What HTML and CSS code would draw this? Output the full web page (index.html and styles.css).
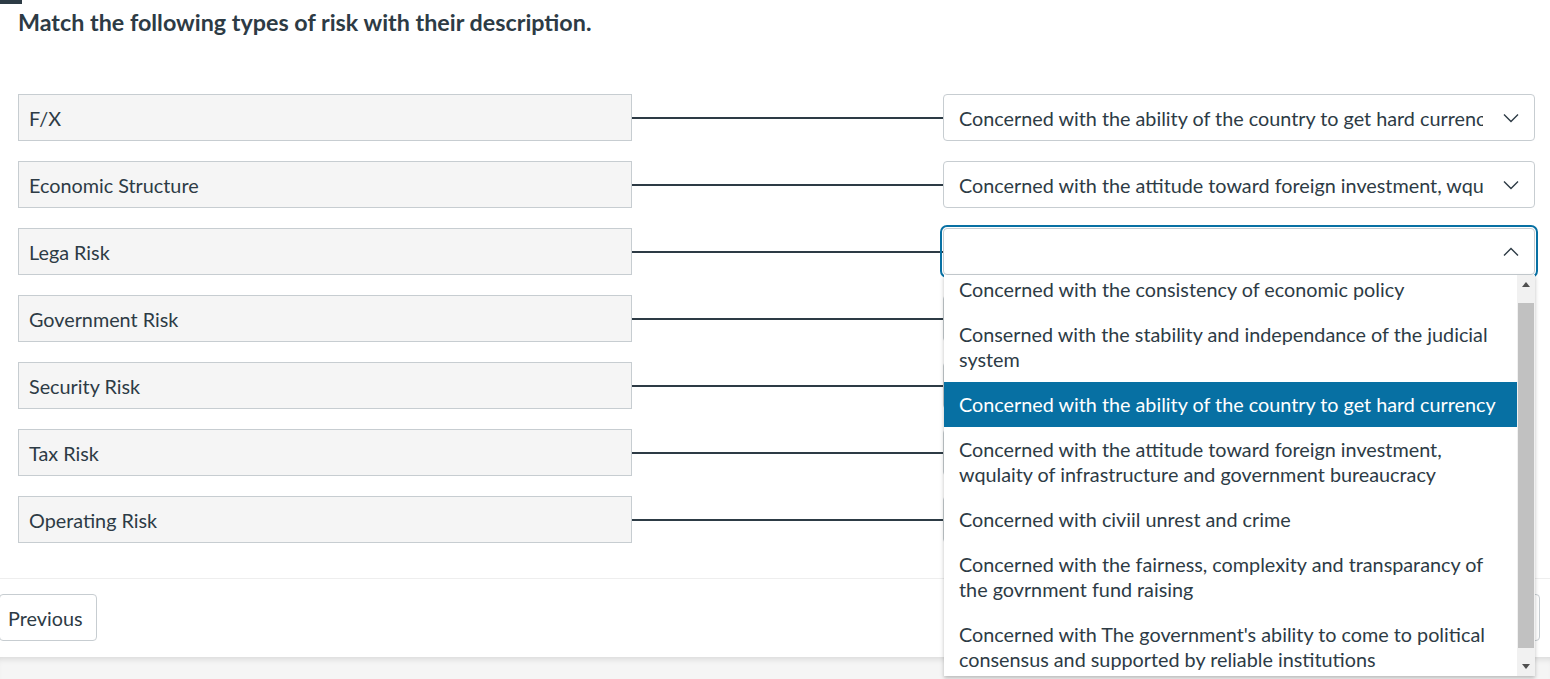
FILE: index.html
```html
<!doctype html>
<html lang="en">
  <head>
    <meta charset="utf-8">
    <title>Quiz question</title>
    <link rel="stylesheet" href="styles.css">
  </head>
  <body>
    <div class="topmark"></div>
    <div class="question">
      <h1 class="prompt">Match the following types of risk with their description.</h1>
      <div class="matches">
        <div class="row">
          <div class="term">F/X</div>
          <div class="link"></div>
          <div class="select">
            <span class="value">Concerned with the ability of the country to get hard currency</span>
            <svg class="chev" width="16" height="10" viewBox="0 0 16 10"><polyline points="1,1.5 8,8.5 15,1.5"/></svg>
          </div>
        </div>
        <div class="row">
          <div class="term">Economic Structure</div>
          <div class="link"></div>
          <div class="select">
            <span class="value">Concerned with the attitude toward foreign investment, wqulaity of infrastructure and government bureaucracy</span>
            <svg class="chev" width="16" height="10" viewBox="0 0 16 10"><polyline points="1,1.5 8,8.5 15,1.5"/></svg>
          </div>
        </div>
        <div class="row">
          <div class="term">Lega Risk</div>
          <div class="link"></div>
          <div class="select open">
            <span class="value"></span>
            <svg class="chev" width="16" height="10" viewBox="0 0 16 10"><polyline points="1,8.5 8,1.5 15,8.5"/></svg>
            <div class="menu">
              <ul class="options">
                <li>Concerned with the consistency of economic policy</li>
                <li>Conserned with the stability and independance of the judicial system</li>
                <li class="active">Concerned with the ability of the country to get hard currency</li>
                <li>Concerned with the attitude toward foreign investment, wqulaity of infrastructure and government bureaucracy</li>
                <li>Concerned with civiil unrest and crime</li>
                <li>Concerned with the fairness, complexity and transparancy of the govrnment fund raising</li>
                <li>Concerned with The government's ability to come to political consensus and supported by reliable institutions</li>
              </ul>
              <div class="scrollbar">
                <span class="arrow up"></span>
                <span class="thumb"></span>
                <span class="arrow down"></span>
              </div>
            </div>
          </div>
        </div>
        <div class="row">
          <div class="term">Government Risk</div>
          <div class="link"></div>
          <div class="select"><span class="value"></span></div>
        </div>
        <div class="row">
          <div class="term">Security Risk</div>
          <div class="link"></div>
          <div class="select"><span class="value"></span></div>
        </div>
        <div class="row">
          <div class="term">Tax Risk</div>
          <div class="link"></div>
          <div class="select"><span class="value"></span></div>
        </div>
        <div class="row">
          <div class="term">Operating Risk</div>
          <div class="link"></div>
          <div class="select"><span class="value"></span></div>
        </div>
      </div>
    </div>
    <div class="footer">
      <button class="btn">Previous</button>
      <button class="btn next" aria-label="Next"></button>
    </div>
    <div class="below"></div>
  </body>
</html>
```

FILE: styles.css
```css
* { box-sizing: border-box; }
body { margin: 0; font-family: Lato, "Open Sans", sans-serif; color: #2d3b45; background: #fff; overflow: hidden; }

.topmark { width: 22px; height: 4px; background: #2d3b45; }

.question { padding: 0 15px 0 18px; }
h1.prompt { font-size: 23.3px; font-weight: bold; line-height: 28px; margin: 4px 0 0 0; }

.matches { margin-top: 58px; display: flex; flex-direction: column; gap: 20px; }
.row { display: flex; align-items: center; height: 47px; }
.term { width: 614px; height: 47px; background: #f5f5f5; border: 1px solid #c7cdd1; padding: 0 10px; font-size: 19.8px; display: flex; align-items: center; }
.link { width: 311px; height: 2px; background: #2d3b45; }
.select { position: relative; width: 592px; height: 47px; border: 1px solid #c7cdd1; border-radius: 4px; background: #fff; display: flex; align-items: center; padding: 0 16px 0 15px; font-size: 19.8px; }
.select .value { flex: 1; white-space: nowrap; overflow: hidden; margin-right: 20px; }
.select .chev { flex: none; fill: none; stroke: #2d3b45; stroke-width: 1.4; margin-right: -1px; }
.select.open { outline: 2px solid #0770a3; outline-offset: 1px; }

.menu { position: absolute; top: 46px; left: 0; width: 591px; height: 401px; background: #fff; box-shadow: 0 2px 4px rgba(0,0,0,0.25); display: flex; overflow: hidden; z-index: 5; }
.options { list-style: none; margin: -8px 0 0 0; padding: 0; flex: 1; }
.options li { padding: 10px 15px; line-height: 25px; font-size: 19.8px; }
.options li.active { background: #0770a3; color: #fff; }
.scrollbar { width: 18px; background: #f1f1f1; display: flex; flex-direction: column; align-items: center; }
.scrollbar .arrow { width: 0; height: 0; border-left: 4px solid transparent; border-right: 4px solid transparent; margin: 7px 0; }
.scrollbar .arrow.up { border-bottom: 5px solid #505050; }
.scrollbar .arrow.down { border-top: 5px solid #505050; }
.scrollbar .thumb { flex: 1; width: 16px; background: #c1c1c1; margin: 9px 0 9px 0; }

.footer { margin-top: 35px; border-top: 1px solid #eeeeee; height: 79px; display: flex; justify-content: space-between; align-items: flex-start; padding: 15px 10px 0 0; }
.btn { font-family: Lato, "Open Sans", sans-serif; font-size: 19.8px; color: #2d3b45; background: #fff; border: 1px solid #c7cdd1; border-radius: 4px; height: 47px; padding: 0 14px 0 8px; margin-left: -1px; }
.btn.next { width: 90px; }
.below { height: 40px; background: #f5f5f5; box-shadow: inset 0 6px 6px -4px rgba(0,0,0,0.12); }
```
